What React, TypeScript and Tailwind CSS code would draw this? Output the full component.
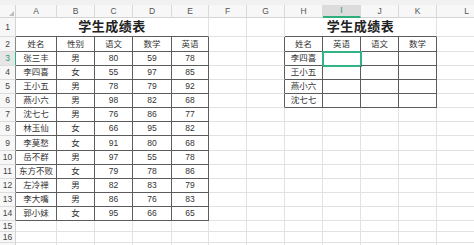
import React from 'react'

const cols = [
  { k: 'A', w: 'w-[41px]' },
  { k: 'B', w: 'w-[38px]' },
  { k: 'C', w: 'w-[38px]' },
  { k: 'D', w: 'w-[39px]' },
  { k: 'E', w: 'w-[37px]' },
  { k: 'F', w: 'w-[38px]' },
  { k: 'G', w: 'w-[38px]' },
  { k: 'H', w: 'w-[38px]' },
  { k: 'I', w: 'w-[38px]' },
  { k: 'J', w: 'w-[38px]' },
  { k: 'K', w: 'w-[38px]' },
  { k: 'L', w: 'w-[60px]' },
]

const rowH: Record<number, string> = {
  2: 'h-[15px]',
  9: 'h-[15px]',
  15: 'h-[11px]',
  16: 'h-[11px]',
  17: 'h-[11px]',
}

const scores = [
  ['姓名', '性别', '语文', '数学', '英语'],
  ['张三丰', '男', '80', '59', '78'],
  ['李四喜', '女', '55', '97', '85'],
  ['王小五', '男', '78', '79', '92'],
  ['燕小六', '男', '98', '82', '68'],
  ['沈七七', '男', '76', '86', '77'],
  ['林玉仙', '女', '66', '95', '82'],
  ['李莫愁', '女', '91', '80', '68'],
  ['岳不群', '男', '97', '55', '78'],
  ['东方不败', '女', '79', '78', '86'],
  ['左冷禅', '男', '82', '83', '79'],
  ['李大嘴', '男', '86', '76', '83'],
  ['郭小妹', '女', '95', '66', '65'],
]

const lookup = [
  ['姓名', '英语', '语文', '数学'],
  ['李四喜', '', '', ''],
  ['王小五', '', '', ''],
  ['燕小六', '', '', ''],
  ['沈七七', '', '', ''],
]

const inT1 = (r: number, c: number) => r >= 2 && r <= 14 && c >= 0 && c <= 4
const inT2 = (r: number, c: number) => r >= 2 && r <= 6 && c >= 7 && c <= 10
const inT = (r: number, c: number) => inT1(r, c) || inT2(r, c)

function text(r: number, c: number) {
  if (inT1(r, c)) return scores[r - 2][c]
  if (inT2(r, c)) return lookup[r - 2][c - 7]
  return ''
}

const font = { fontFamily: '"Liberation Sans", "Noto Sans CJK SC", sans-serif' }

function RowHead({ r }: { r: number }) {
  const active = r === 3
  return (
    <div
      className={`w-[16px] shrink-0 flex items-center justify-center text-[8.5px] border-b border-b-[#dcdcdc] border-r ${
        active
          ? 'bg-[#e6e6e6] text-[#1e9b6c] border-r-[#2fae7d]'
          : r >= 2 && r <= 14
          ? 'bg-[#f7f7f7] text-[#444] border-r-[#8a8a8a]'
          : 'bg-[#f7f7f7] text-[#444] border-r-[#d4d4d4]'
      }`}
    >
      {r <= 16 ? r : ''}
    </div>
  )
}

function Cell({ r, c }: { r: number; c: number }) {
  const right = inT(r, c) || inT(r, c + 1)
  const bottom = inT(r, c) || inT(r + 1, c)
  const selected = r === 3 && c === 8
  return (
    <div
      className={`${cols[c].w} shrink-0 flex items-center justify-center text-[8.5px] text-[#333] border-r border-b ${
        right ? 'border-r-[#5c5c5c]' : 'border-r-[#e2e2e2]'
      } ${bottom ? 'border-b-[#5c5c5c]' : 'border-b-[#e2e2e2]'} ${
        selected ? 'outline-2 outline-[#33b383] -outline-offset-1' : ''
      }`}
    >
      {text(r, c)}
    </div>
  )
}

function Title({ w }: { w: string }) {
  return (
    <div
      className={`${w} shrink-0 flex items-end justify-center pb-[1px] border-r border-r-[#e2e2e2] border-b border-b-[#5c5c5c] text-[13px] font-bold text-[#222] tracking-[0.5px]`}
      style={{ fontFamily: '"Noto Sans CJK SC", sans-serif' }}
    >
      学生成绩表
    </div>
  )
}

export default function App() {
  const rows = Array.from({ length: 16 }, (_, i) => i + 2)
  return (
    <div className="w-[474px] h-[245px] overflow-hidden bg-white" style={font}>
      <div className="h-[5px] bg-[#f1f1f1]" />

      {/* column letters */}
      <div className="flex h-[13px]">
        <div className="w-[16px] shrink-0 bg-[#f7f7f7] border-r border-b border-[#d4d4d4] flex items-end justify-end p-[1px]">
          <svg width="5" height="5" viewBox="0 0 5 5">
            <polygon points="5,0 5,5 0,5" fill="#bdbdbd" />
          </svg>
        </div>
        {cols.map((col) => (
          <div
            key={col.k}
            className={`${col.w} shrink-0 flex items-center justify-center text-[8.5px] border-r border-r-[#dadada] ${
              col.k === 'I'
                ? 'bg-[#dcdcdc] text-[#1e9b6c] border-b-2 border-b-[#2fae7d]'
                : 'bg-[#f7f7f7] text-[#555] border-b border-b-[#d4d4d4]'
            }`}
          >
            {col.k}
          </div>
        ))}
      </div>

      {/* row 1 */}
      <div className="flex h-[19px]">
        <RowHead r={1} />
        <Title w="w-[193px]" />
        <Cell r={1} c={5} />
        <Cell r={1} c={6} />
        <Title w="w-[152px]" />
        <Cell r={1} c={11} />
      </div>

      {rows.map((r) => (
        <div key={r} className={`flex ${rowH[r] ?? 'h-[14px]'}`}>
          <RowHead r={r} />
          {cols.map((_, c) => (
            <Cell key={c} r={r} c={c} />
          ))}
        </div>
      ))}
    </div>
  )
}
